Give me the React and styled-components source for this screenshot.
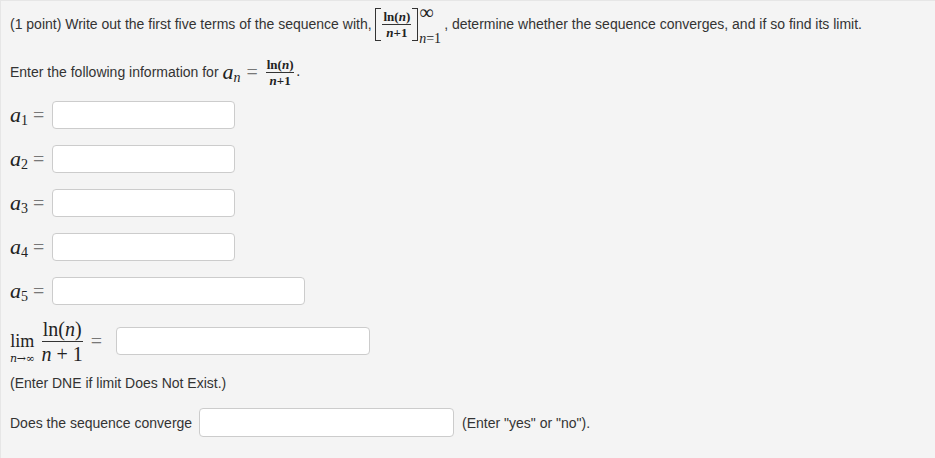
import React from "react";
import styled, { createGlobalStyle } from "styled-components";

const Global = createGlobalStyle`
  html, body { margin: 0; padding: 0; }
  body {
    background: #f4f4f4;
    font-family: "Liberation Sans", Arial, sans-serif;
    font-size: 14px;
    color: #333;
  }
`;

const Page = styled.div`
  width: 935px;
  height: 458px;
  box-sizing: border-box;
  border-top: 1px solid #e6e6e6;
  border-left: 1px solid #e6e6e6;
  padding-left: 9px;
  display: flex;
  flex-direction: column;
  overflow: hidden;
`;

const Line = styled.div`
  display: flex;
  align-items: center;
  height: ${(p) => p.$h}px;
  margin-top: ${(p) => p.$mt || 0}px;
  white-space: pre;
`;

const Math = styled.span`
  font-family: "Liberation Serif", "Times New Roman", serif;
  color: #222;
  display: inline-flex;
  align-items: center;
  margin-right: ${(p) => p.$mr || 0}px;
`;

const Frac = styled.span`
  display: inline-flex;
  flex-direction: column;
  align-items: center;
  font-size: ${(p) => p.$fs}px;
  line-height: 1;
  margin: 0 ${(p) => p.$mx || 0}px;
  font-weight: ${(p) => (p.$bold ? 700 : 400)};
`;

const Num = styled.span`
  padding: 0 1px ${(p) => p.$pb || 1}px;
  border-bottom: 1px solid #333;
`;

const Den = styled.span`
  padding-top: ${(p) => p.$pt || 1}px;
`;

const I = styled.i`
  font-style: italic;
`;

const Bracket = styled.span`
  display: inline-block;
  width: 5px;
  height: 31px;
  border: 1.5px solid #333;
  ${(p) => (p.$right ? "border-left: none;" : "border-right: none;")}
`;

const Scripts = styled.span`
  display: inline-flex;
  flex-direction: column;
  justify-content: space-between;
  height: 40px;
  font-size: 14px;
  line-height: 1;
  margin-left: 1px;
  margin-top: 4px;
`;

const Sup = styled.span`
  font-size: 20px;
  line-height: 12px;
`;

const Eq = styled.span`
  color: #777;
  font-size: ${(p) => p.$fs || 20}px;
  margin: 0 ${(p) => p.$mx || 6}px;
  font-family: "Liberation Serif", serif;
`;

const Var = styled.span`
  font-family: "Liberation Serif", "Times New Roman", serif;
  font-style: italic;
  font-size: 22px;
  color: #222;
`;

const Sub = styled.sub`
  font-style: normal;
  font-size: 14px;
  vertical-align: -3px;
`;

const Row = styled.div`
  display: flex;
  align-items: center;
  height: ${(p) => p.$h || 28}px;
  margin-top: ${(p) => p.$mt || 0}px;
`;

const Label = styled.div`
  width: ${(p) => p.$w}px;
  display: flex;
  align-items: center;
  flex-shrink: 0;
`;

const Input = styled.input`
  box-sizing: border-box;
  width: ${(p) => p.$w}px;
  height: ${(p) => p.$h || 28}px;
  border: 1px solid #ccc;
  border-radius: 4px;
  background: #fff;
  padding: 4px 6px;
  font-size: 14px;
  outline: none;
`;

const Lim = styled.span`
  display: inline-flex;
  flex-direction: column;
  align-items: center;
  margin-right: 7px;
  margin-top: 13px;
`;

const LimWord = styled.span`
  font-size: 18px;
  line-height: 21px;
`;

const LimSub = styled.span`
  font-size: 11px;
  line-height: 13px;
  white-space: nowrap;
  font-family: "DejaVu Serif", serif;
  font-style: italic;
  letter-spacing: -0.3px;
`;

const Note = styled.div`
  height: 18px;
  line-height: 18px;
  margin-top: ${(p) => p.$mt || 0}px;
`;

const After = styled.span`
  margin-left: 8px;
`;

export default function App() {
  const terms = [1, 2, 3, 4, 5];
  return (
    <>
      <Global />
      <Page>
        <Line $h={46}>
          {"(1 point) Write out the first five terms of the sequence with, "}
          <Math $mr={3}>
            <Bracket />
            <Frac $fs={13} $mx={1} $bold>
              <Num>ln(<I>n</I>)</Num>
              <Den><I>n</I>+1</Den>
            </Frac>
            <Bracket $right />
            <Scripts>
              <Sup>∞</Sup>
              <span><I>n</I>=1</span>
            </Scripts>
          </Math>
          {", determine whether the sequence converges, and if so find its limit."}
        </Line>
        <Line $h={30} $mt={10}>
          {"Enter the following information for "}
          <Math>
            <Var>a<Sub><I>n</I></Sub></Var>
            <Eq $mx={6}>=</Eq>
            <Frac $fs={13} $mx={2} $bold>
              <Num>ln(<I>n</I>)</Num>
              <Den><I>n</I>+1</Den>
            </Frac>
            .
          </Math>
        </Line>
        {terms.map((k, i) => (
          <Row key={k} $mt={i === 0 ? 14 : 16}>
            <Label $w={42}>
              <Var>a<Sub>{k}</Sub></Var>
              <Eq $fs={20} $mx={5}>=</Eq>
            </Label>
            <Input $w={k === 5 ? 253 : 183} />
          </Row>
        ))}
        <Row $h={42} $mt={15}>
          <Label $w={106}>
            <Math>
              <Lim>
                <LimWord>lim</LimWord>
                <LimSub>n→∞</LimSub>
              </Lim>
              <Frac $fs={20}>
                <Num $pb={2}>ln(<I>n</I>)</Num>
                <Den $pt={2}><I>n</I> + 1</Den>
              </Frac>
              <Eq $fs={20} $mx={8}>=</Eq>
            </Math>
          </Label>
          <Input $w={254} />
        </Row>
        <Note $mt={12}>(Enter DNE if limit Does Not Exist.)</Note>
        <Row $h={29} $mt={16}>
          <Label $w={189}>Does the sequence converge</Label>
          <Input $w={255} $h={29} />
          <After>(Enter "yes" or "no").</After>
        </Row>
      </Page>
    </>
  );
}
